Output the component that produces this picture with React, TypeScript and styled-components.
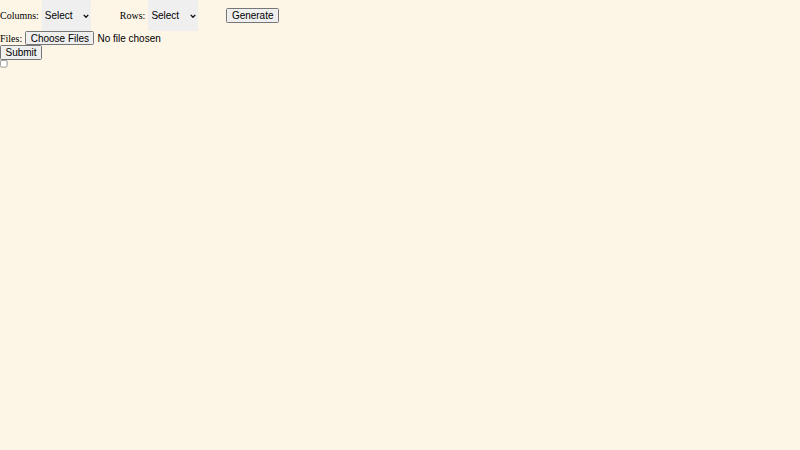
import styled, { createGlobalStyle } from 'styled-components';

const Global = createGlobalStyle`
  html, body {
    margin: 0;
    background: #fdf5e6;
  }
  body {
    font-family: "Liberation Serif", serif;
  }
`;

// the whole form is drawn at a reduced page zoom
const Page = styled.div`
  zoom: 0.75;
  font-size: 13.33px;
  color: #000;
`;

const Toolbar = styled.div`
  display: flex;
  align-items: center;
  gap: 38px;
  height: 41px;
`;

const Field = styled.label`
  display: flex;
  align-items: center;
  gap: 4px;
  height: 100%;
`;

const PickerWrap = styled.span`
  position: relative;
  display: inline-flex;
  height: 41px;
`;

const Picker = styled.select`
  appearance: none;
  height: 41px;
  width: 66px;
  border: none;
  border-radius: 0;
  background: #efefef;
  font-family: "Liberation Sans", Arial, sans-serif;
  font-size: 13.33px;
  padding: 0 0 0 4px;
  color: #000;
  outline: none;
`;

const Caret = styled.svg`
  position: absolute;
  right: 3px;
  top: 18px;
  width: 8px;
  height: 6px;
  pointer-events: none;
`;

const Button = styled.button`
  font-family: "Liberation Sans", Arial, sans-serif;
  font-size: 13.33px;
`;

const FileRow = styled.div`
  display: flex;
  align-items: center;
  gap: 4px;
`;

const FileInput = styled.input`
  font-family: "Liberation Sans", Arial, sans-serif;
  font-size: 13.33px;
`;

const Box = styled.input`
  display: block;
  margin: 0;
  width: 11px;
  height: 11px;
`;

function Select() {
  return (
    <PickerWrap>
      <Picker defaultValue="">
        <option value="">Select</option>
        <option>1</option>
        <option>2</option>
        <option>3</option>
      </Picker>
      <Caret viewBox="0 0 8 6">
        <path d="M1 1.2 L4 4.4 L7 1.2" fill="none" stroke="#111" strokeWidth="1.8" />
      </Caret>
    </PickerWrap>
  );
}

export default function App() {
  return (
    <Page>
      <Global />
      <Toolbar>
        <Field>
          Columns:
          <Select />
        </Field>
        <Field>
          Rows:
          <Select />
        </Field>
        <Button type="button">Generate</Button>
      </Toolbar>
      <FileRow>
        Files:
        <FileInput type="file" multiple />
      </FileRow>
      <div>
        <Button type="submit">Submit</Button>
      </div>
      <Box type="checkbox" />
    </Page>
  );
}
